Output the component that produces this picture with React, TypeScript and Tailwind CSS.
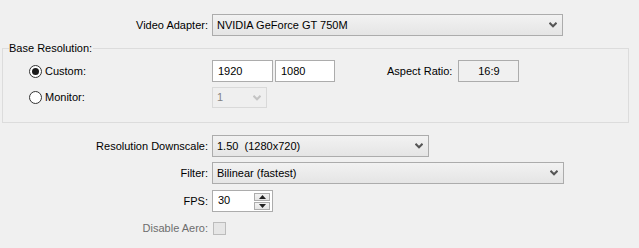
import React from "react";

function Chevron({ color = "#555" }: { color?: string }) {
  return (
    <svg width="8" height="6" viewBox="0 0 8 6" className="shrink-0">
      <path d="M0.5 0.8 L4 4.3 L7.5 0.8" fill="none" stroke={color} strokeWidth="2" />
    </svg>
  );
}

function Combo({
  width,
  value,
  disabled = false,
  height = "h-[22px]",
}: {
  width: string;
  value: string;
  disabled?: boolean;
  height?: string;
}) {
  return (
    <div
      className={`${width} ${height} flex items-center justify-between pl-[4px] pr-[5px] border ${
        disabled
          ? "border-[#d9d9d9] bg-[#efefef] text-[#838383]"
          : "border-[#acacac] bg-gradient-to-b from-[#f2f2f2] to-[#e5e5e5] text-black"
      }`}
    >
      <span className="whitespace-pre">{value}</span>
      <Chevron color={disabled ? "#c4c4c4" : "#555"} />
    </div>
  );
}

function Field({ label, muted = false, children, mt }: { label: string; muted?: boolean; children: React.ReactNode; mt: string }) {
  return (
    <div className={`flex items-center ${mt}`}>
      <div className={`w-[212px] pr-[4px] text-right ${muted ? "text-[#6d6d6d]" : ""}`}>{label}</div>
      {children}
    </div>
  );
}

function Radio({ checked }: { checked?: boolean }) {
  return (
    <span className="w-[13px] h-[13px] rounded-full border border-[#333] bg-white flex items-center justify-center shrink-0">
      {checked && <span className="w-[7px] h-[7px] rounded-full bg-[#1a1a1a]" />}
    </span>
  );
}

export default function App() {
  return (
    <div className="w-[639px] h-[248px] bg-[#f0f0f0] text-[11px] leading-none text-black font-['Liberation_Sans',Arial,sans-serif] pt-[14px] overflow-hidden">
      <Field label="Video Adapter:" mt="">
        <Combo width="w-[351px]" value="NVIDIA GeForce GT 750M" />
      </Field>

      <div className="relative mt-[12px] ml-[2px] w-[627px] h-[75px] border border-[#dcdcdc]">
        <span className="absolute left-[6px] -top-[6px] bg-[#f0f0f0] pr-[1px]">Base Resolution:</span>

        <div className="flex items-center mt-[11px] h-[22px]">
          <div className="w-[209px] flex items-center gap-[3px] pl-[26px]">
            <Radio checked />
            <span>Custom:</span>
          </div>
          <div className="w-[61px] h-[22px] border border-[#acacac] bg-white flex items-center pl-[5px]">1920</div>
          <div className="ml-[2px] w-[60px] h-[22px] border border-[#acacac] bg-white flex items-center pl-[5px]">1080</div>
          <span className="ml-[52px]">Aspect Ratio:</span>
          <div className="ml-[6px] w-[61px] h-[22px] border border-[#acacac] bg-[#f0f0f0] flex items-center justify-center">16:9</div>
        </div>

        <div className="flex items-center mt-[5px] h-[21px]">
          <div className="w-[209px] flex items-center gap-[3px] pl-[26px]">
            <Radio />
            <span>Monitor:</span>
          </div>
          <Combo width="w-[55px]" height="h-[21px]" value="1" disabled />
        </div>
      </div>

      <Field label="Resolution Downscale:" mt="mt-[12px]">
        <Combo width="w-[217px]" value="1.50  (1280x720)" />
      </Field>

      <Field label="Filter:" mt="mt-[5px]">
        <Combo width="w-[352px]" value="Bilinear (fastest)" />
      </Field>

      <Field label="FPS:" mt="mt-[6px]">
        <div className="w-[61px] h-[22px] border border-[#acacac] bg-white flex items-start justify-between pl-[5px] pt-[4px] pr-[2px]">
          <span>30</span>
          <div className="flex flex-col gap-[1px] -mt-[2px]">
            <div className="w-[16px] h-[8px] border border-[#acacac] bg-gradient-to-b from-[#f2f2f2] to-[#e5e5e5] flex items-center justify-center">
              <svg width="7" height="4" viewBox="0 0 7 4"><path d="M0 4 L3.5 0 L7 4 Z" fill="#222" /></svg>
            </div>
            <div className="w-[16px] h-[8px] border border-[#acacac] bg-gradient-to-b from-[#f2f2f2] to-[#e5e5e5] flex items-center justify-center">
              <svg width="7" height="4" viewBox="0 0 7 4"><path d="M0 0 L7 0 L3.5 4 Z" fill="#222" /></svg>
            </div>
          </div>
        </div>
      </Field>

      <Field label="Disable Aero:" muted mt="mt-[10px]">
        <span className="ml-[1px] w-[13px] h-[13px] border border-[#bcbcbc] bg-[#e6e6e6]" />
      </Field>
    </div>
  );
}
